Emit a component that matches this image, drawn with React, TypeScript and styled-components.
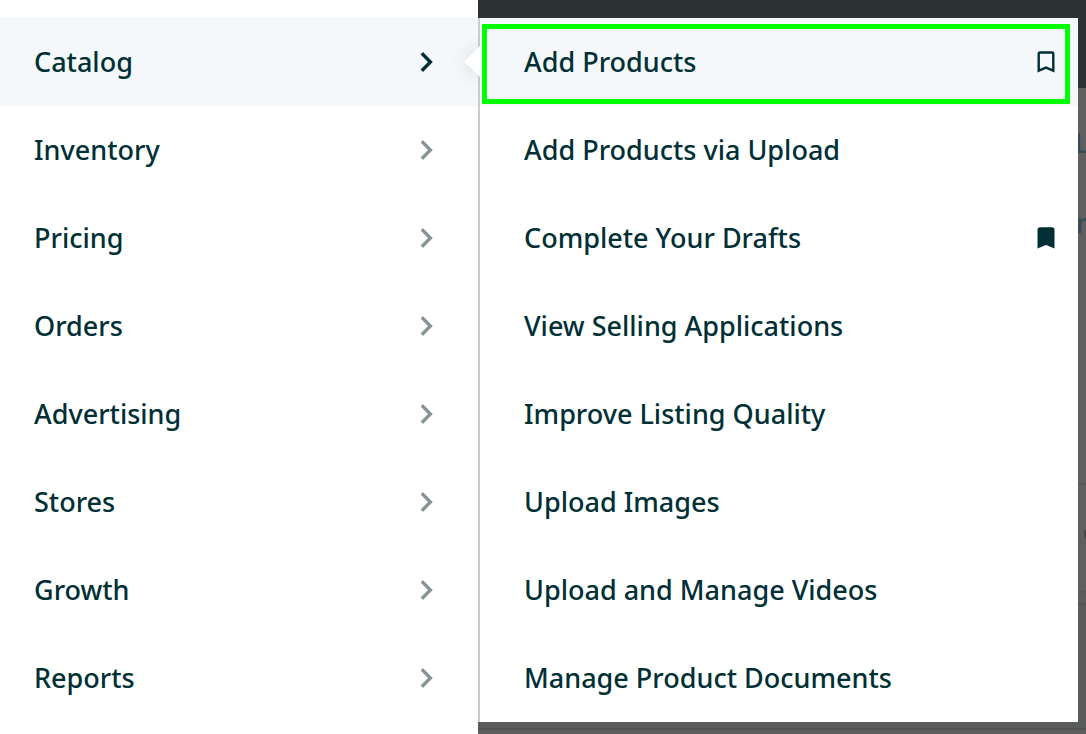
import React from "react";
import styled, { createGlobalStyle } from "styled-components";

const ink = "#002f36";
const tint = "#f4f8fa";

const GlobalStyle = createGlobalStyle`
  *, *::before, *::after { box-sizing: border-box; }
  body {
    margin: 0;
    background: #fff;
    color: ${ink};
    font-family: "Noto Sans", "Open Sans", sans-serif;
    font-size: 27px;
    font-weight: 500;
    line-height: 40px;
  }
`;

const Page = styled.div`
  display: flex;
  min-height: 100vh;
  overflow: hidden;
`;

const Sidebar = styled.nav`
  flex: 0 0 478px;
  padding-top: 18px;
  background: #fff;
`;

const List = styled.ul`
  margin: 0;
  padding: 0;
  list-style: none;
`;

const SideItem = styled.li<{ $active: boolean }>`
  position: relative;
  background: ${(p) => (p.$active ? tint : "transparent")};
`;

const SideLink = styled.a<{ $active: boolean }>`
  display: flex;
  align-items: center;
  justify-content: space-between;
  height: 88px;
  padding: 0 44px 0 34px;
  color: ${ink};
  text-decoration: none;

  svg { color: ${(p) => (p.$active ? ink : "#879596")}; }
`;

const PointerWindow = styled.span`
  position: absolute;
  z-index: 2;
  top: 0;
  right: -2px;
  width: 48px;
  height: 88px;
  overflow: hidden;
  pointer-events: none;

  &::after {
    content: "";
    position: absolute;
    top: 32px;
    right: -12px;
    width: 23px;
    height: 23px;
    background: #fff;
    transform: rotate(45deg);
    box-shadow: 0 0 20px rgba(0, 0, 0, 0.12);
  }
`;

const Stage = styled.main`
  position: relative;
  flex: 1;
  min-width: 0;
  padding: 18px 8px 12px 0;
  overflow: hidden;
  background: linear-gradient(
    #2b3335 0 88px,
    #5f5f5f 88px 483px,
    #585858 483px 485px,
    #5f5f5f 485px 591px,
    #595959 591px 593px,
    #5c5d5d 593px 603px,
    #505353 603px 605px,
    #595b5a 605px 728px,
    #505252 728px 730px,
    #5e5e5e 730px
  );
`;

const Behind = styled.span<{ $top: number; $right: number }>`
  position: absolute;
  top: ${(p) => p.$top}px;
  right: ${(p) => p.$right}px;
  color: #364b53;
`;

const BehindDot = styled.span`
  position: absolute;
  top: 526px;
  right: -14px;
  width: 16px;
  height: 16px;
  border-radius: 50%;
  background: #424444;
`;

const Submenu = styled.nav`
  position: relative;
  border-left: 2px solid #ccc;
  background: #fff;
`;

const SubItem = styled.li<{ $highlighted: boolean }>`
  position: relative;
  display: flex;
  align-items: center;
  height: 88px;
  padding: 0 22px 0 44px;
  background: ${(p) => (p.$highlighted ? tint : "transparent")};
`;

const Outline = styled.span`
  position: absolute;
  inset: 6px 8px 2px 2px;
  border: 5px solid #00ff00;
  pointer-events: none;
`;

const SubLink = styled.a`
  flex: 1;
  color: ${ink};
  text-decoration: none;
  white-space: nowrap;
`;

const BookmarkButton = styled.button`
  display: flex;
  padding: 0;
  border: 0;
  background: none;
  color: ${ink};
  cursor: pointer;
`;

const Chevron = () => (
  <svg width="14" height="22" viewBox="0 0 14 22" fill="none" aria-hidden="true">
    <path d="M1.8 2.2 10.4 11 1.8 19.8" stroke="currentColor" strokeWidth="3.4" />
  </svg>
);

const Bookmark = ({ filled }: { filled: boolean }) => (
  <svg width="20" height="22" viewBox="0 0 20 22" aria-hidden="true">
    <path
      d="M2.7 19.6V2.8Q2.7 1.5 4 1.5H16Q17.3 1.5 17.3 2.8V19.6L10 16.6Z"
      fill={filled ? "currentColor" : "none"}
      stroke="currentColor"
      strokeWidth="2.4"
    />
  </svg>
);

const sections = ["Catalog", "Inventory", "Pricing", "Orders", "Advertising", "Stores", "Growth", "Reports"];

const links: { label: string; bookmark?: "empty" | "saved" }[] = [
  { label: "Add Products", bookmark: "empty" },
  { label: "Add Products via Upload" },
  { label: "Complete Your Drafts", bookmark: "saved" },
  { label: "View Selling Applications" },
  { label: "Improve Listing Quality" },
  { label: "Upload Images" },
  { label: "Upload and Manage Videos" },
  { label: "Manage Product Documents" },
];

export default function App() {
  return (
    <Page>
      <GlobalStyle />
      <Sidebar aria-label="Main menu">
        <List>
          {sections.map((name, i) => (
            <SideItem key={name} $active={i === 0}>
              <SideLink href="#" $active={i === 0}>
                {name}
                <Chevron />
              </SideLink>
              {i === 0 && <PointerWindow />}
            </SideItem>
          ))}
        </List>
      </Sidebar>
      <Stage>
        <Behind $top={123} $right={-3} aria-hidden="true">L</Behind>
        <Behind $top={203} $right={-7} aria-hidden="true">n</Behind>
        <BehindDot />
        <Submenu aria-label="Catalog">
          <List>
            {links.map(({ label, bookmark }, i) => (
              <SubItem key={label} $highlighted={i === 0}>
                <SubLink href="#">{label}</SubLink>
                {bookmark && (
                  <BookmarkButton
                    type="button"
                    aria-label={`Bookmark ${label}`}
                    aria-pressed={bookmark === "saved"}
                  >
                    <Bookmark filled={bookmark === "saved"} />
                  </BookmarkButton>
                )}
                {i === 0 && <Outline />}
              </SubItem>
            ))}
          </List>
        </Submenu>
      </Stage>
    </Page>
  );
}
